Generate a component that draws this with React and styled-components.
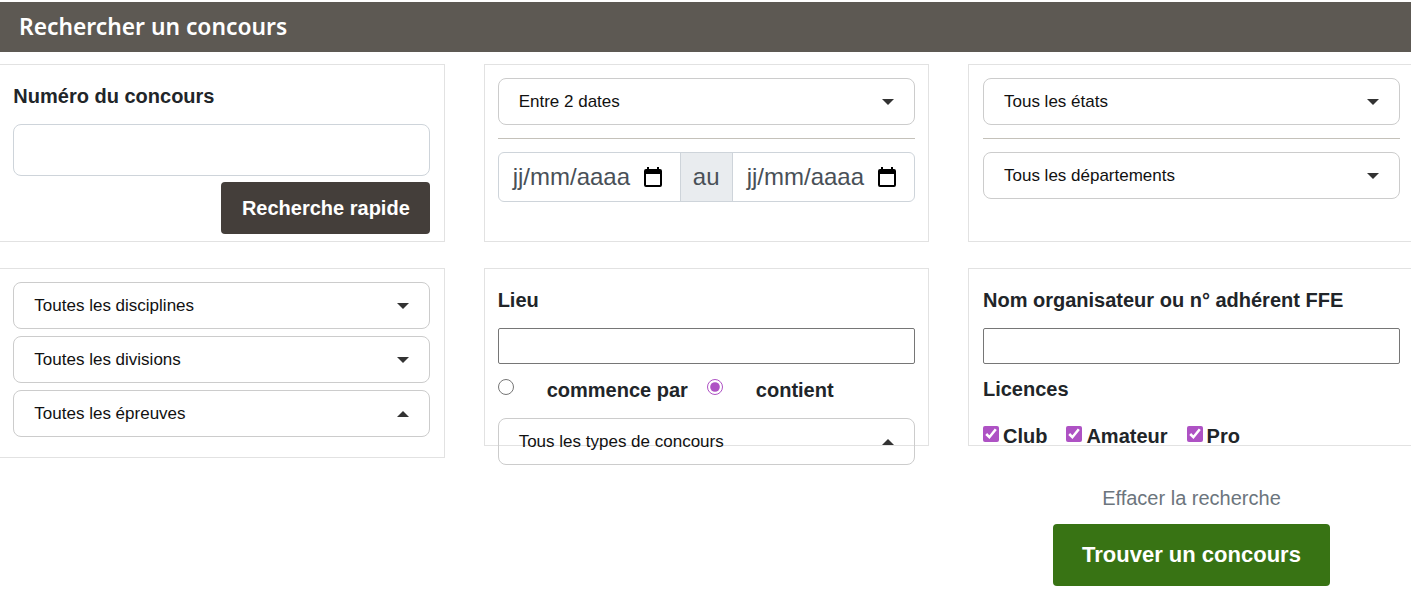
import React from 'react'
import styled, { createGlobalStyle } from 'styled-components'

const GlobalStyle = createGlobalStyle`
  html, body {
    margin: 0;
    padding: 0;
    background: #fff;
    overflow-x: hidden;
  }
  body {
    font-family: "Liberation Sans", Arial, sans-serif;
    color: #212529;
  }
  * {
    box-sizing: border-box;
  }
`

const Page = styled.div`
  width: 1411px;
  height: 604px;
  padding-top: 2px;
  overflow: hidden;
`

const Header = styled.h1`
  margin: 0;
  height: 50px;
  padding: 0 0 2px 19px;
  display: flex;
  align-items: center;
  background: #5d5953;
  color: #fff;
  font-family: "Noto Sans", sans-serif;
  font-size: 22.8px;
  font-weight: 600;
`

const Grid = styled.div`
  display: grid;
  grid-template-columns: repeat(3, 445.67px);
  column-gap: 38.67px;
  row-gap: 26px;
  align-items: start;
  margin: 12px 0 0 -0.67px;
`

const Card = styled.section`
  height: ${props => props.$height}px;
  border: 1px solid #e2e2e2;
  padding: ${props => props.$top || 13}px 14px 0 ${props => props.$left || 13}px;
`

const Label = styled.label`
  display: block;
  font-size: 20px;
  line-height: 24px;
  font-weight: 700;
  color: #212529;
  margin-top: ${props => props.$mt || 0}px;
  margin-bottom: ${props => props.$gap || 16}px;
`

const RoundedInput = styled.input`
  display: block;
  width: 417px;
  height: 52px;
  border: 1px solid #ced4da;
  border-radius: 8px;
  background: #fff;
`

const PlainInput = styled.input`
  display: block;
  width: 417px;
  height: 36px;
  border: 1px solid #767676;
  border-radius: 2px;
  background: #fff;
`

const ButtonRow = styled.div`
  display: flex;
  justify-content: flex-end;
  width: 417px;
  margin-top: 6px;
`

const DarkButton = styled.button`
  width: 209px;
  height: 52px;
  border: none;
  border-radius: 4px;
  background: #443e3a;
  color: #fff;
  font: 700 20px "Liberation Sans", Arial, sans-serif;
`

const SelectBox = styled.div`
  display: flex;
  align-items: center;
  justify-content: space-between;
  width: 417px;
  height: 47px;
  padding: 0 20px;
  border: 1px solid #cccccc;
  border-radius: 8px;
  font-size: 17px;
  color: #111;
`

const Caret = styled.span`
  width: 0;
  height: 0;
  border-left: 6px solid transparent;
  border-right: 6px solid transparent;
  ${props => props.$up
    ? 'border-bottom: 6px solid #333;'
    : 'border-top: 6px solid #333;'}
`

const Divider = styled.hr`
  width: 417px;
  height: 1px;
  margin: 13px 0;
  border: none;
  background: #c4c1ba;
`

const DateGroup = styled.div`
  display: flex;
  width: 417px;
  height: 50px;
  border: 1px solid #ced4da;
  border-radius: 6px;
  overflow: hidden;
`

const DateField = styled.div`
  flex: 1;
  display: flex;
  align-items: center;
  justify-content: space-between;
  padding: 0 15px 0 14px;
  font-size: 24px;
  color: #495057;
`

const DateAddon = styled.div`
  width: 53px;
  display: flex;
  align-items: center;
  justify-content: center;
  background: #e9ecef;
  border-left: 1px solid #ced4da;
  border-right: 1px solid #ced4da;
  font-size: 24px;
  color: #495057;
`

const Stack = styled.div`
  display: flex;
  flex-direction: column;
  gap: 7px;
`

const RadioRow = styled.div`
  display: flex;
  align-items: flex-start;
  margin: 14px 0 16px;
`

const Radio = styled.input`
  width: 16px;
  height: 16px;
  margin: 1px 0 0 0;
  accent-color: #ae52c4;
  flex: none;
`

const RadioText = styled.span`
  margin: 0 19px 0 33px;
  font-size: 20px;
  line-height: 24px;
  font-weight: 700;
`

const CheckRow = styled.div`
  display: flex;
  gap: 19px;
`

const CheckLabel = styled.label`
  display: flex;
  align-items: flex-start;
  gap: 4px;
  font-size: 20px;
  line-height: 24px;
  font-weight: 700;
`

const Check = styled.input`
  width: 16px;
  height: 16px;
  margin: 2px 0 0 0;
  accent-color: #ae52c4;
`

const Footer = styled.div`
  grid-column: 3;
  display: flex;
  flex-direction: column;
  align-items: center;
  width: 447px;
  margin-top: 2px;
`

const ClearLink = styled.a`
  font-size: 20px;
  line-height: 24px;
  color: #6c757d;
  margin-bottom: 14px;
`

const SubmitButton = styled.button`
  width: 277px;
  height: 62px;
  border: none;
  border-radius: 4px;
  background: #387314;
  color: #fff;
  font: 700 22px "Liberation Sans", Arial, sans-serif;
`

const CalendarIcon = () => (
  <svg width='24' height='24' viewBox='0 0 24 24' fill='#000' style={{ flex: 'none' }}>
    <path d='M19 4h-1V2h-2v2H8V2H6v2H5a2 2 0 0 0-2 2v14a2 2 0 0 0 2 2h14a2 2 0 0 0 2-2V6a2 2 0 0 0-2-2zm0 16H5V9h14v11z' />
  </svg>
)

const Select = ({ children, up }) => (
  <SelectBox>
    {children}
    <Caret $up={up} />
  </SelectBox>
)

export default function App () {
  return (
    <Page>
      <GlobalStyle />
      <Header>Rechercher un concours</Header>
      <Grid>
        <Card $height={178} $top={19}>
          <Label>Numéro du concours</Label>
          <RoundedInput type='text' />
          <ButtonRow>
            <DarkButton>Recherche rapide</DarkButton>
          </ButtonRow>
        </Card>

        <Card $height={178}>
          <Select>Entre 2 dates</Select>
          <Divider />
          <DateGroup>
            <DateField>jj/mm/aaaa<CalendarIcon /></DateField>
            <DateAddon>au</DateAddon>
            <DateField>jj/mm/aaaa<CalendarIcon /></DateField>
          </DateGroup>
        </Card>

        <Card $height={178} $left={14}>
          <Select>Tous les états</Select>
          <Divider />
          <Select>Tous les départements</Select>
        </Card>

        <Card $height={190}>
          <Stack>
            <Select>Toutes les disciplines</Select>
            <Select>Toutes les divisions</Select>
            <Select up>Toutes les épreuves</Select>
          </Stack>
        </Card>

        <Card $height={178} $top={19}>
          <Label>Lieu</Label>
          <PlainInput type='text' />
          <RadioRow>
            <Radio type='radio' name='lieu' />
            <RadioText>commence par</RadioText>
            <Radio type='radio' name='lieu' defaultChecked />
            <RadioText>contient</RadioText>
          </RadioRow>
          <Select up>Tous les types de concours</Select>
        </Card>

        <Card $height={178} $top={19} $left={14}>
          <Label>Nom organisateur ou n° adhérent FFE</Label>
          <PlainInput type='text' />
          <Label $mt={13} $gap={23}>Licences</Label>
          <CheckRow>
            <CheckLabel><Check type='checkbox' defaultChecked />Club</CheckLabel>
            <CheckLabel><Check type='checkbox' defaultChecked />Amateur</CheckLabel>
            <CheckLabel><Check type='checkbox' defaultChecked />Pro</CheckLabel>
          </CheckRow>
        </Card>

        <Footer>
          <ClearLink>Effacer la recherche</ClearLink>
          <SubmitButton>Trouver un concours</SubmitButton>
        </Footer>
      </Grid>
    </Page>
  )
}
